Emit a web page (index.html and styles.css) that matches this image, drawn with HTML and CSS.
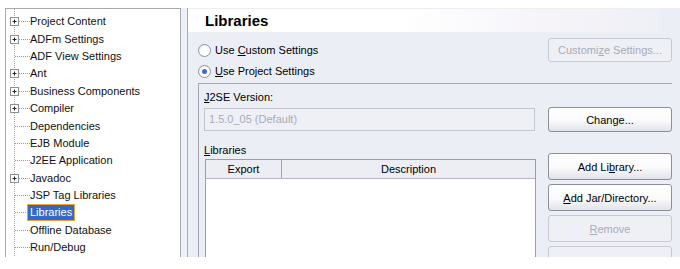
FILE: index.html
```html
<!DOCTYPE html>
<html lang="en">
<head>
    <meta charset="UTF-8">
    <title>Project Properties - Libraries</title>
    <link rel="stylesheet" href="styles.css">
</head>
<body>
    <div class="window">
        <div class="tree">
            <div class="node"><svg class="branch" width="24" height="17"><rect x="4.5" y="4.5" width="8" height="8" fill="#fff" stroke="#8d8f96"/><path d="M6.5 8.5h4M8.5 6.5v4" stroke="#222"/><path d="M13 8.5h11" stroke="#999" stroke-dasharray="1 1"/></svg><span class="label">Project Content</span></div>
            <div class="node"><svg class="branch" width="24" height="17"><rect x="4.5" y="4.5" width="8" height="8" fill="#fff" stroke="#8d8f96"/><path d="M6.5 8.5h4M8.5 6.5v4" stroke="#222"/><path d="M13 8.5h11" stroke="#999" stroke-dasharray="1 1"/></svg><span class="label">ADFm Settings</span></div>
            <div class="node"><svg class="branch" width="24" height="17"><path d="M9 8.5h15" stroke="#999" stroke-dasharray="1 1"/></svg><span class="label">ADF View Settings</span></div>
            <div class="node"><svg class="branch" width="24" height="17"><rect x="4.5" y="4.5" width="8" height="8" fill="#fff" stroke="#8d8f96"/><path d="M6.5 8.5h4M8.5 6.5v4" stroke="#222"/><path d="M13 8.5h11" stroke="#999" stroke-dasharray="1 1"/></svg><span class="label">Ant</span></div>
            <div class="node"><svg class="branch" width="24" height="17"><rect x="4.5" y="4.5" width="8" height="8" fill="#fff" stroke="#8d8f96"/><path d="M6.5 8.5h4M8.5 6.5v4" stroke="#222"/><path d="M13 8.5h11" stroke="#999" stroke-dasharray="1 1"/></svg><span class="label">Business Components</span></div>
            <div class="node"><svg class="branch" width="24" height="17"><rect x="4.5" y="4.5" width="8" height="8" fill="#fff" stroke="#8d8f96"/><path d="M6.5 8.5h4M8.5 6.5v4" stroke="#222"/><path d="M13 8.5h11" stroke="#999" stroke-dasharray="1 1"/></svg><span class="label">Compiler</span></div>
            <div class="node"><svg class="branch" width="24" height="17"><path d="M9 8.5h15" stroke="#999" stroke-dasharray="1 1"/></svg><span class="label">Dependencies</span></div>
            <div class="node"><svg class="branch" width="24" height="17"><path d="M9 8.5h15" stroke="#999" stroke-dasharray="1 1"/></svg><span class="label">EJB Module</span></div>
            <div class="node"><svg class="branch" width="24" height="17"><path d="M9 8.5h15" stroke="#999" stroke-dasharray="1 1"/></svg><span class="label">J2EE Application</span></div>
            <div class="node"><svg class="branch" width="24" height="17"><rect x="4.5" y="4.5" width="8" height="8" fill="#fff" stroke="#8d8f96"/><path d="M6.5 8.5h4M8.5 6.5v4" stroke="#222"/><path d="M13 8.5h11" stroke="#999" stroke-dasharray="1 1"/></svg><span class="label">Javadoc</span></div>
            <div class="node"><svg class="branch" width="24" height="17"><path d="M9 8.5h15" stroke="#999" stroke-dasharray="1 1"/></svg><span class="label">JSP Tag Libraries</span></div>
            <div class="node"><svg class="branch" width="24" height="17"><path d="M9 8.5h15" stroke="#999" stroke-dasharray="1 1"/></svg><span class="label selected">Libraries</span></div>
            <div class="node"><svg class="branch" width="24" height="17"><path d="M9 8.5h15" stroke="#999" stroke-dasharray="1 1"/></svg><span class="label">Offline Database</span></div>
            <div class="node"><svg class="branch" width="24" height="17"><path d="M9 8.5h15" stroke="#999" stroke-dasharray="1 1"/></svg><span class="label">Run/Debug</span></div>
        </div>

        <div class="splitter"></div>

        <div class="panel">
            <div class="title">Libraries</div>

            <div class="choice-row">
                <label class="choice"><span class="radio"></span><span>Use <u>C</u>ustom Settings</span></label>
                <div class="btn disabled"><span>Customi<u>z</u>e Settings...</span></div>
            </div>
            <div class="choice-row second">
                <label class="choice"><span class="radio on"></span><span><u>U</u>se Project Settings</span></label>
            </div>

            <div class="group">
                <div class="field-label"><u>J</u>2SE Version:</div>
                <div class="field-row">
                    <div class="textfield">1.5.0_05 (Default)</div>
                    <div class="btn"><span>Chan<u>g</u>e...</span></div>
                </div>

                <div class="field-label libs"><u>L</u>ibraries</div>
                <div class="libs-row">
                    <div class="table">
                        <div class="table-head">
                            <div class="col export">Export</div>
                            <div class="col desc">Description</div>
                        </div>
                    </div>
                    <div class="actions">
                        <div class="btn"><span>Add Li<u>b</u>rary...</span></div>
                        <div class="btn"><span><u>A</u>dd Jar/Directory...</span></div>
                        <div class="btn disabled"><span><u>R</u>emove</span></div>
                        <div class="btn disabled"></div>
                    </div>
                </div>
            </div>
        </div>
    </div>
</body>
</html>
```

FILE: styles.css
```css
* {
    margin: 0;
    padding: 0;
    box-sizing: border-box;
}

body {
    background: #fff;
    font-family: 'Liberation Sans', Arial, sans-serif;
    font-size: 11px;
    color: #000;
}

.window {
    display: flex;
    height: 257px;
    padding-top: 8px;
    overflow: hidden;
}

/* left navigation tree */
.tree {
    width: 176px;
    margin-left: 5px;
    padding-top: 4px;
    background-color: #fff;
    background-image: linear-gradient(to bottom, #a3a3a3 1px, transparent 1px);
    background-size: 1px 2px;
    background-position: 8px 0;
    background-repeat: repeat-y;
    border: 1px solid #a6a9b3;
    border-bottom: none;
}

.node {
    display: flex;
    align-items: center;
    height: 17.4px;
    white-space: nowrap;
}

.branch {
    flex: none;
    display: block;
}

.label {
    line-height: 15px;
    color: #111;
}

.label.selected {
    margin-left: -3px;
    padding: 0 2px;
    line-height: 15px;
    background: #316ac5;
    color: #fff;
    border: 1px solid #e9a23c;
}

.splitter {
    width: 6px;
    background: #eef0f7;
}

/* right settings panel */
.panel {
    flex: 1;
    background: #eceef5;
    border-left: 1px solid #a9adb9;
    padding-right: 8px;
}

.title {
    height: 23px;
    margin-top: 1px;
    margin-right: 12px;
    padding-left: 17px;
    line-height: 23px;
    font-size: 15px;
    font-weight: bold;
    background: linear-gradient(to right, #fff 0%, #fff 45%, #f6f4f9 75%, #eef0f6 100%);
}

.choice-row {
    display: flex;
    align-items: center;
    justify-content: space-between;
    height: 24px;
    margin-top: 6px;
    padding-left: 10px;
}

.choice-row.second {
    height: 20px;
    margin-top: -1px;
}

.choice {
    display: flex;
    align-items: center;
    gap: 4px;
}

.radio {
    display: flex;
    align-items: center;
    justify-content: center;
    width: 13px;
    height: 13px;
    border: 1px solid #8e94a3;
    border-radius: 50%;
    background: radial-gradient(circle at 60% 60%, #fff 40%, #e3e5ec 100%);
}

.radio.on::after {
    content: '';
    width: 5px;
    height: 5px;
    border-radius: 50%;
    background: #3a6fd0;
}

.btn {
    display: flex;
    align-items: center;
    justify-content: center;
    width: 124px;
    height: 24px;
    border: 1px solid #8b909c;
    border-radius: 3px;
    background: linear-gradient(to bottom, #fff 0%, #fafafc 55%, #e2e3e9 100%);
}

.btn.disabled {
    color: #a8acb7;
    border-color: #c7cad4;
    background: #eef0f6;
}

.group {
    margin: 2px 0 0 10px;
    padding-left: 5px;
    border-top: 1px solid #a3a7b3;
    border-left: 1px solid #a3a7b3;
}

.field-label {
    height: 14px;
    margin-top: 6px;
    line-height: 14px;
}

.field-row {
    display: flex;
    align-items: center;
    gap: 13px;
    margin-top: 3px;
}

.textfield {
    flex: 1;
    height: 23px;
    padding-left: 4px;
    line-height: 21px;
    color: #a9acb6;
    border: 1px solid #c3c6cf;
    background: #eef0f6;
}

.field-row .btn {
    height: 25px;
}

.field-label.libs {
    margin-top: 11px;
}

.libs-row {
    display: flex;
    gap: 12px;
}

.table {
    flex: 1;
    height: 110px;
    margin: 2px 0 0 1px;
    background: #fff;
    border: 1px solid #9b9fab;
}

.table-head {
    display: flex;
    height: 19px;
    line-height: 18px;
    background: #eceef4;
    border-bottom: 1px solid #b4b7c1;
}

.col {
    text-align: center;
}

.col.export {
    width: 76px;
    border-right: 1px solid #a3a6b0;
}

.col.desc {
    flex: 1;
}

.actions {
    display: flex;
    flex-direction: column;
    gap: 4px;
    margin-top: -4px;
}

.actions .btn {
    height: 27px;
}
```
